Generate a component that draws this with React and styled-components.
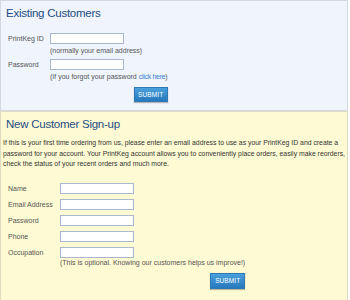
import React from 'react';
import styled, { createGlobalStyle } from 'styled-components';

const GlobalStyle = createGlobalStyle`
  html, body {
    margin: 0;
    padding: 0;
    background: #ffffff;
  }
  body {
    font-family: "Liberation Sans", Arial, sans-serif;
  }
`;

const Page = styled.div`
  width: 348px;
  display: flex;
  flex-direction: column;
`;

const Panel = styled.section`
  background: ${(p) => (p.$tone === 'yellow' ? '#fefad3' : '#eff4fd')};
  border: 1px solid ${(p) => (p.$tone === 'yellow' ? '#dedbc0' : '#d3d8e2')};
  padding: ${(p) => p.$padding};
`;

const Title = styled.h2`
  margin: 0;
  font-family: "Liberation Sans", Arial, sans-serif;
  font-weight: normal;
  font-size: 11.5px;
  line-height: 13px;
  letter-spacing: -0.25px;
  color: #1d4c86;
  padding-left: 5px;
`;

const Intro = styled.p`
  margin: 7px 0 0 2px;
  font-size: 6.85px;
  line-height: 10.5px;
  color: #333333;
  white-space: nowrap;
`;

const Form = styled.div`
  display: grid;
  grid-template-columns: ${(p) => p.$labelWidth}px max-content;
  justify-content: start;
  row-gap: ${(p) => p.$rowGap}px;
  margin-top: ${(p) => p.$top}px;
  padding-left: 7px;
`;

const Label = styled.label`
  font-size: 7px;
  line-height: 11px;
  color: #555555;
  align-self: start;
`;

const Field = styled.div`
  display: flex;
  flex-direction: column;
`;

const Input = styled.input`
  box-sizing: border-box;
  width: 74px;
  height: 11px;
  margin: 0;
  padding: 0;
  background: #ffffff;
  border: 1px solid #a9b9cd;
`;

const Hint = styled.span`
  margin-top: ${(p) => p.$top ?? 2}px;
  font-size: 7px;
  line-height: 9px;
  color: #555555;
  white-space: nowrap;
`;

const HelpLink = styled.a`
  color: #3b7fd0;
  text-decoration: none;
  letter-spacing: -0.3px;
`;

const Spacer = styled.span``;

const Submit = styled.button`
  justify-self: end;
  box-sizing: border-box;
  width: ${(p) => p.$w}px;
  height: ${(p) => p.$h}px;
  margin-top: ${(p) => p.$top}px;
  padding: 0;
  border: 1px solid #2f78b3;
  background: linear-gradient(#4aa0dc, #2579bd);
  color: #ffffff;
  font-family: "Liberation Sans", Arial, sans-serif;
  font-size: 6.5px;
  letter-spacing: 0.1px;
  box-shadow: 0 1px 1px rgba(0, 0, 0, 0.25);
`;

export default function App() {
  return (
    <Page>
      <GlobalStyle />
      <Panel $tone="blue" $padding="6px 0 8px 0">
        <Title>Existing Customers</Title>
        <Form $labelWidth={42} $rowGap={4} $top={13}>
          <Label>PrintKeg ID</Label>
          <Field>
            <Input type="text" />
            <Hint>(normally your email address)</Hint>
          </Field>
          <Label>Password</Label>
          <Field>
            <Input type="password" />
            <Hint>
              (If you forgot your password <HelpLink href="#">click here</HelpLink>)
            </Hint>
          </Field>
          <Spacer />
          <Submit $w={34} $h={15} $top={2}>SUBMIT</Submit>
        </Form>
      </Panel>
      <Panel $tone="yellow" $padding="6px 0 11px 0">
        <Title>New Customer Sign-up</Title>
        <Intro>
          If this is your first time ordering from us, please enter an email address to use as your PrintKeg ID and create a
          <br />
          password for your account. Your PrintKeg account allows you to conveniently place orders, easily make reorders,
          <br />
          check the status of your recent orders and much more.
        </Intro>
        <Form $labelWidth={52} $rowGap={5} $top={13}>
          <Label>Name</Label>
          <Input type="text" />
          <Label>Email Address</Label>
          <Input type="text" />
          <Label>Password</Label>
          <Input type="password" />
          <Label>Phone</Label>
          <Input type="text" />
          <Label>Occupation</Label>
          <Field>
            <Input type="text" />
            <Hint $top={0}>(This is optional. Knowing our customers helps us improve!)</Hint>
          </Field>
          <Spacer />
          <Submit $w={35} $h={16} $top={1}>SUBMIT</Submit>
        </Form>
      </Panel>
    </Page>
  );
}
